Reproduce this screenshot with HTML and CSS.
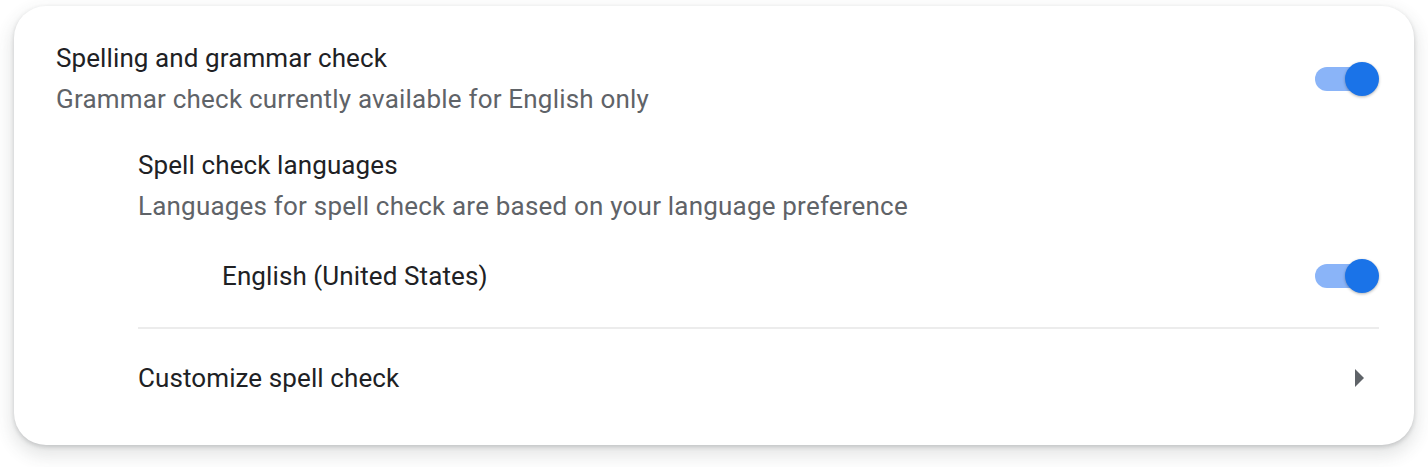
FILE: index.html
```html
<!DOCTYPE html>
<html>
<head>
<meta charset="utf-8">
<link rel="stylesheet" href="styles.css">
</head>
<body>
<div class="card">
  <div class="row main-row">
    <div class="text">
      <div class="title">Spelling and grammar check</div>
      <div class="sub">Grammar check currently available for English only</div>
    </div>
    <div class="toggle"><span class="knob"></span></div>
  </div>
  <div class="nested">
    <div class="title">Spell check languages</div>
    <div class="sub">Languages for spell check are based on your language preference</div>
    <div class="row lang-row">
      <div class="title">English (United States)</div>
      <div class="toggle"><span class="knob"></span></div>
    </div>
    <div class="divider"></div>
    <div class="row link-row">
      <div class="title">Customize spell check</div>
      <svg class="arrow" width="12" height="18" viewBox="0 0 12 18"><path d="M1 0 L10 9 L1 18 Z" fill="#5f6368"/></svg>
    </div>
  </div>
</div>
</body>
</html>
```

FILE: styles.css
```css
html, body {
  margin: 0;
  padding: 0;
  background: #ffffff;
}
body {
  padding: 6px 14px 22px 14px;
  font-family: Roboto, "Noto Sans", Arial, sans-serif;
}
.card {
  width: 1400px;
  box-sizing: border-box;
  height: 439px;
  background: #fff;
  border-radius: 32px;
  box-shadow: 0 2px 4px rgba(60,64,67,0.22), 0 8px 16px 4px rgba(60,64,67,0.12);
  padding: 34px 35px 0 42px;
}
.row {
  display: flex;
  align-items: center;
  justify-content: space-between;
}
.title {
  font-size: 26px;
  line-height: 36px;
  color: #202124;
  letter-spacing: 0.1px;
}
.sub {
  font-size: 26px;
  line-height: 36px;
  color: #5f6368;
  margin-top: 5px;
  letter-spacing: 0.2px;
}
.nested {
  margin-left: 82px;
  margin-top: 30px;
}
.lang-row {
  margin-top: 34px;
  padding-left: 84px;
}
.toggle {
  position: relative;
  width: 62px;
  height: 24px;
  border-radius: 12px;
  background: #8ab4f8;
  margin-right: 2px;
}
.knob {
  position: absolute;
  right: -2px;
  top: -5px;
  width: 34px;
  height: 34px;
  border-radius: 50%;
  background: #1a73e8;
  box-shadow: 0 1px 3px rgba(0,0,0,0.3);
}
.divider {
  height: 2px;
  background: #ececec;
  margin-top: 33px;
}
.link-row {
  margin-top: 31px;
}
.arrow {
  margin-right: 13px;
}
```
